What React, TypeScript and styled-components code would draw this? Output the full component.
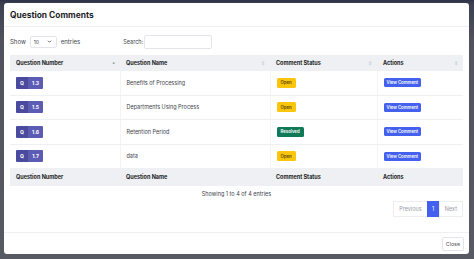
import React from 'react'
import styled, { createGlobalStyle } from 'styled-components'

const GlobalStyle = createGlobalStyle`
  html, body {
    margin: 0;
    padding: 0;
    width: 474px;
    height: 259px;
    overflow: hidden;
    font-family: 'Inter', 'Liberation Sans', sans-serif;
  }
`

const Backdrop = styled.div`
  width: 474px;
  height: 259px;
  box-sizing: border-box;
  padding: 3px 5px 5px 4px;
  background: linear-gradient(180deg, #2f3248 0px, #3b3f50 3px, #50535d 40px, #575a62 100%);
`

const Modal = styled.div`
  height: 100%;
  background: #fff;
  border-radius: 3px;
  display: flex;
  flex-direction: column;
`

const Header = styled.div`
  height: 23px;
  display: flex;
  align-items: center;
  padding: 0 6px;
  border-bottom: 1px solid #eef0f3;
  h4 {
    margin: 0;
    font-size: 8.4px;
    font-weight: 700;
    color: #1c1d26;
  }
`

const Body = styled.div`
  flex: 1;
  padding: 7px 6px 0;
`

const Controls = styled.div`
  display: flex;
  align-items: center;
  height: 15px;
  font-size: 6px;
  color: #3d3f4a;
  margin-bottom: 6px;
`

const Length = styled.label`
  display: flex;
  align-items: center;
  gap: 4px;
`

const Select = styled.div`
  width: 27px;
  height: 12px;
  box-sizing: border-box;
  border: 1px solid #e3e5ea;
  border-radius: 2px;
  display: flex;
  align-items: center;
  justify-content: space-between;
  padding: 0 4px 0 3px;
  font-size: 5px;
  svg {
    width: 5px;
    height: 5px;
  }
`

const SearchBox = styled.label`
  display: flex;
  align-items: center;
  margin-left: 43px;
  font-size: 5.5px;
  span {
    margin-right: 1px;
  }
`

const Input = styled.div`
  width: 68px;
  height: 14px;
  box-sizing: border-box;
  border: 1px solid #e3e5ea;
  border-radius: 2px;
`

const Table = styled.table`
  width: 453px;
  border-collapse: collapse;
  table-layout: fixed;
  font-size: 5.5px;
  color: #3d3f4a;
`

const Th = styled.th<{ w: number; sorted?: boolean; foot?: boolean }>`
  width: ${({ w }) => w}px;
  box-sizing: border-box;
  height: ${({ foot }) => (foot ? 17 : 16)}px;
  background: #eef0f3;
  text-align: left;
  font-weight: 700;
  font-size: 5.5px;
  color: #1c1d26;
  padding: 0 6px;
  position: relative;
  i {
    position: absolute;
    right: 5px;
    top: 50%;
    transform: translateY(-50%);
    font-style: normal;
    font-size: 5px;
    color: ${({ sorted }) => (sorted ? '#777' : '#cfd2d8')};
  }
`

const Td = styled.td`
  height: 23.5px;
  padding: 0 6px;
  border-bottom: 1px solid #eef0f3;
  border-left: 1px solid #f3f4f6;
  &:first-child {
    border-left: none;
  }
`

const QBadge = styled.div`
  display: inline-flex;
  height: 12px;
  border-radius: 1px;
  overflow: hidden;
  font-size: 5px;
  font-weight: 700;
  color: #fff;
  span {
    display: flex;
    align-items: center;
    justify-content: center;
  }
  span:first-child {
    width: 12px;
    background: #4a4a9e;
  }
  span:last-child {
    width: 15px;
    background: #5d5cb4;
  }
`

const Status = styled.span<{ tone: 'open' | 'resolved' }>`
  display: inline-flex;
  align-items: center;
  justify-content: center;
  height: 10px;
  padding: 0 4px;
  border-radius: 1.5px;
  font-size: 4.3px;
  font-weight: 600;
  background: ${({ tone }) => (tone === 'open' ? '#fac50d' : '#0e7a57')};
  color: ${({ tone }) => (tone === 'open' ? '#5a4500' : '#fff')};
`

const ViewButton = styled.button`
  height: 9px;
  padding: 0 3px;
  border: none;
  border-radius: 1.5px;
  background: #4361ee;
  color: #fff;
  font-family: inherit;
  font-size: 4.3px;
  font-weight: 600;
  display: inline-flex;
  align-items: center;
`

const Info = styled.div`
  text-align: center;
  font-size: 5.5px;
  color: #3d3f4a;
  margin-top: 5px;
`

const Pager = styled.div`
  display: flex;
  justify-content: flex-end;
  margin-top: 4px;
`

const PageBtn = styled.span<{ active?: boolean }>`
  height: 16px;
  box-sizing: border-box;
  display: flex;
  align-items: center;
  padding: 0 ${({ active }) => (active ? 4.5 : 5)}px;
  font-size: 5.5px;
  border: 1px solid ${({ active }) => (active ? '#4361ee' : '#eceef2')};
  background: ${({ active }) => (active ? '#4361ee' : '#fff')};
  color: ${({ active }) => (active ? '#fff' : '#9a9ca6')};
  & + & {
    margin-left: -1px;
  }
`

const Footer = styled.div`
  height: 21px;
  border-top: 1px solid #eef0f3;
  display: flex;
  align-items: center;
  justify-content: flex-end;
  padding: 0 5px;
`

const CloseButton = styled.button`
  height: 14px;
  padding: 0 3px;
  border: 1px solid #e3e5ea;
  border-radius: 2px;
  background: #fff;
  color: #555;
  font-family: inherit;
  font-size: 5.3px;
`

type Row = {
  num: string
  name: string
  status: 'open' | 'resolved'
}

const rows: Row[] = [
  { num: '1.3', name: 'Benefits of Processing', status: 'open' },
  { num: '1.5', name: 'Departments Using Process', status: 'open' },
  { num: '1.6', name: 'Retention Period', status: 'resolved' },
  { num: '1.7', name: 'data', status: 'open' },
]

const columns = [
  { label: 'Question Number', w: 110 },
  { label: 'Question Name', w: 150 },
  { label: 'Comment Status', w: 107 },
  { label: 'Actions', w: 86 },
]

const Chevron = () => (
  <svg viewBox="0 0 10 10" fill="none" stroke="#444" strokeWidth="1.6">
    <path d="M2 3.5 L5 6.5 L8 3.5" />
  </svg>
)

const App = () => {
  return (
    <>
      <GlobalStyle />
      <Backdrop>
        <Modal>
          <Header>
            <h4>Question Comments</h4>
          </Header>
          <Body>
            <Controls>
              <Length>
                Show
                <Select>
                  10
                  <Chevron />
                </Select>
                entries
              </Length>
              <SearchBox>
                <span>Search:</span>
                <Input />
              </SearchBox>
            </Controls>
            <Table>
              <thead>
                <tr>
                  {columns.map((c, i) => (
                    <Th key={c.label} w={c.w} sorted={i === 0}>
                      {c.label}
                      <i>{i === 0 ? '˄' : '⇕'}</i>
                    </Th>
                  ))}
                </tr>
              </thead>
              <tbody>
                {rows.map((r) => (
                  <tr key={r.num}>
                    <Td>
                      <QBadge>
                        <span>Q</span>
                        <span>{r.num}</span>
                      </QBadge>
                    </Td>
                    <Td>{r.name}</Td>
                    <Td>
                      <Status tone={r.status}>{r.status === 'open' ? 'Open' : 'Resolved'}</Status>
                    </Td>
                    <Td>
                      <ViewButton>View Comment</ViewButton>
                    </Td>
                  </tr>
                ))}
              </tbody>
              <tfoot>
                <tr>
                  {columns.map((c) => (
                    <Th key={c.label} w={c.w} foot>
                      {c.label}
                    </Th>
                  ))}
                </tr>
              </tfoot>
            </Table>
            <Info>Showing 1 to 4 of 4 entries</Info>
            <Pager>
              <PageBtn>Previous</PageBtn>
              <PageBtn active>1</PageBtn>
              <PageBtn>Next</PageBtn>
            </Pager>
          </Body>
          <Footer>
            <CloseButton>Close</CloseButton>
          </Footer>
        </Modal>
      </Backdrop>
    </>
  )
}

export default App
